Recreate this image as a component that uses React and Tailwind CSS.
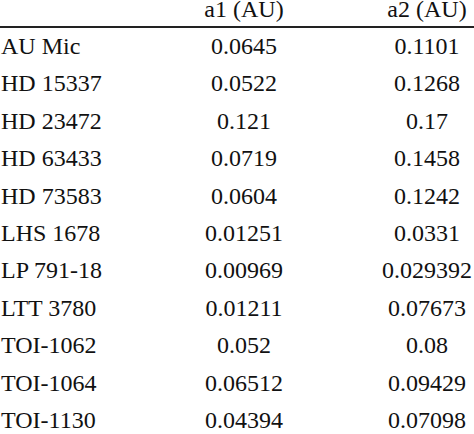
export default function App() {
  const rows = [
    ["AU Mic", "0.0645", "0.1101"],
    ["HD 15337", "0.0522", "0.1268"],
    ["HD 23472", "0.121", "0.17"],
    ["HD 63433", "0.0719", "0.1458"],
    ["HD 73583", "0.0604", "0.1242"],
    ["LHS 1678", "0.01251", "0.0331"],
    ["LP 791-18", "0.00969", "0.029392"],
    ["LTT 3780", "0.01211", "0.07673"],
    ["TOI-1062", "0.052", "0.08"],
    ["TOI-1064", "0.06512", "0.09429"],
    ["TOI-1130", "0.04394", "0.07098"],
  ];
  return (
    <div className="w-[474px] h-[434px] overflow-hidden bg-white text-[24px] text-[#111] font-serif">
      <div className="flex h-[18px] leading-[18px]">
        <div className="w-[184px] shrink-0"></div>
        <div className="w-[120px] shrink-0 text-center whitespace-nowrap">
          <span className="font-['Liberation_Serif']">a1 (AU)</span>
        </div>
        <div className="w-[246px] shrink-0 text-center whitespace-nowrap">
          <span className="font-['Liberation_Serif']">a2 (AU)</span>
        </div>
      </div>
      <div className="mt-[8px] h-[2px] w-[474px] bg-[#222]"></div>
      {rows.map((r) => (
        <div key={r[0]} className="flex h-[37.4px] leading-[37.4px]">
          <div className="w-[184px] shrink-0 pl-[1px] whitespace-nowrap">
            <span className="font-['Liberation_Serif']">{r[0]}</span>
          </div>
          <div className="w-[120px] shrink-0 text-center whitespace-nowrap">
            <span className="font-['Liberation_Serif']">{r[1]}</span>
          </div>
          <div className="w-[246px] shrink-0 text-center whitespace-nowrap">
            <span className="font-['Liberation_Serif']">{r[2]}</span>
          </div>
        </div>
      ))}
    </div>
  );
}
